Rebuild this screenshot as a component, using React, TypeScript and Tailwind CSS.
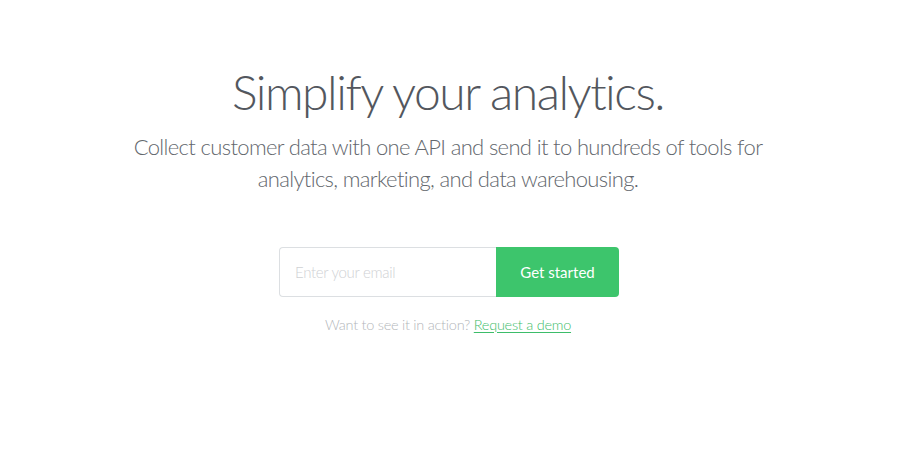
export default function App() {
  return (
    <div className="w-[905px] h-[453px] bg-white flex flex-col items-center pr-[9px]" style={{ fontFamily: "Lato, 'Open Sans', sans-serif" }}>
      <h1 className="mt-[62px] text-[48px] leading-[60px] font-light text-[#53575e] tracking-[-1.5px]">Simplify your analytics.</h1>
      <p className="mt-[9px] w-[660px] text-center text-[22px] leading-[32px] font-light text-[#63676d] tracking-[-0.65px]">
        Collect customer data with one API and send it to hundreds of tools for analytics, marketing, and data warehousing.
      </p>
      <form className="mt-[52px] ml-[2px] flex w-[340px] h-[50px]">
        <input
          type="email"
          placeholder="Enter your email"
          className="flex-1 min-w-0 border border-[#dcdfe2] border-r-0 rounded-l-[4px] px-[15px] text-[15px] font-light outline-none placeholder:text-[#cfd1d4] text-[#555] tracking-[-0.3px]"
        />
        <button type="button" className="w-[123px] bg-[#3dc56c] rounded-r-[4px] text-white text-[15px]">Get started</button>
      </form>
      <p className="mt-[17px] text-[14.5px] font-light text-[#b3b6ba] tracking-[-0.25px]">
        Want to see it in action? <a href="#" className="text-[#3dbd6a] underline underline-offset-2">Request a demo</a>
      </p>
    </div>
  );
}
